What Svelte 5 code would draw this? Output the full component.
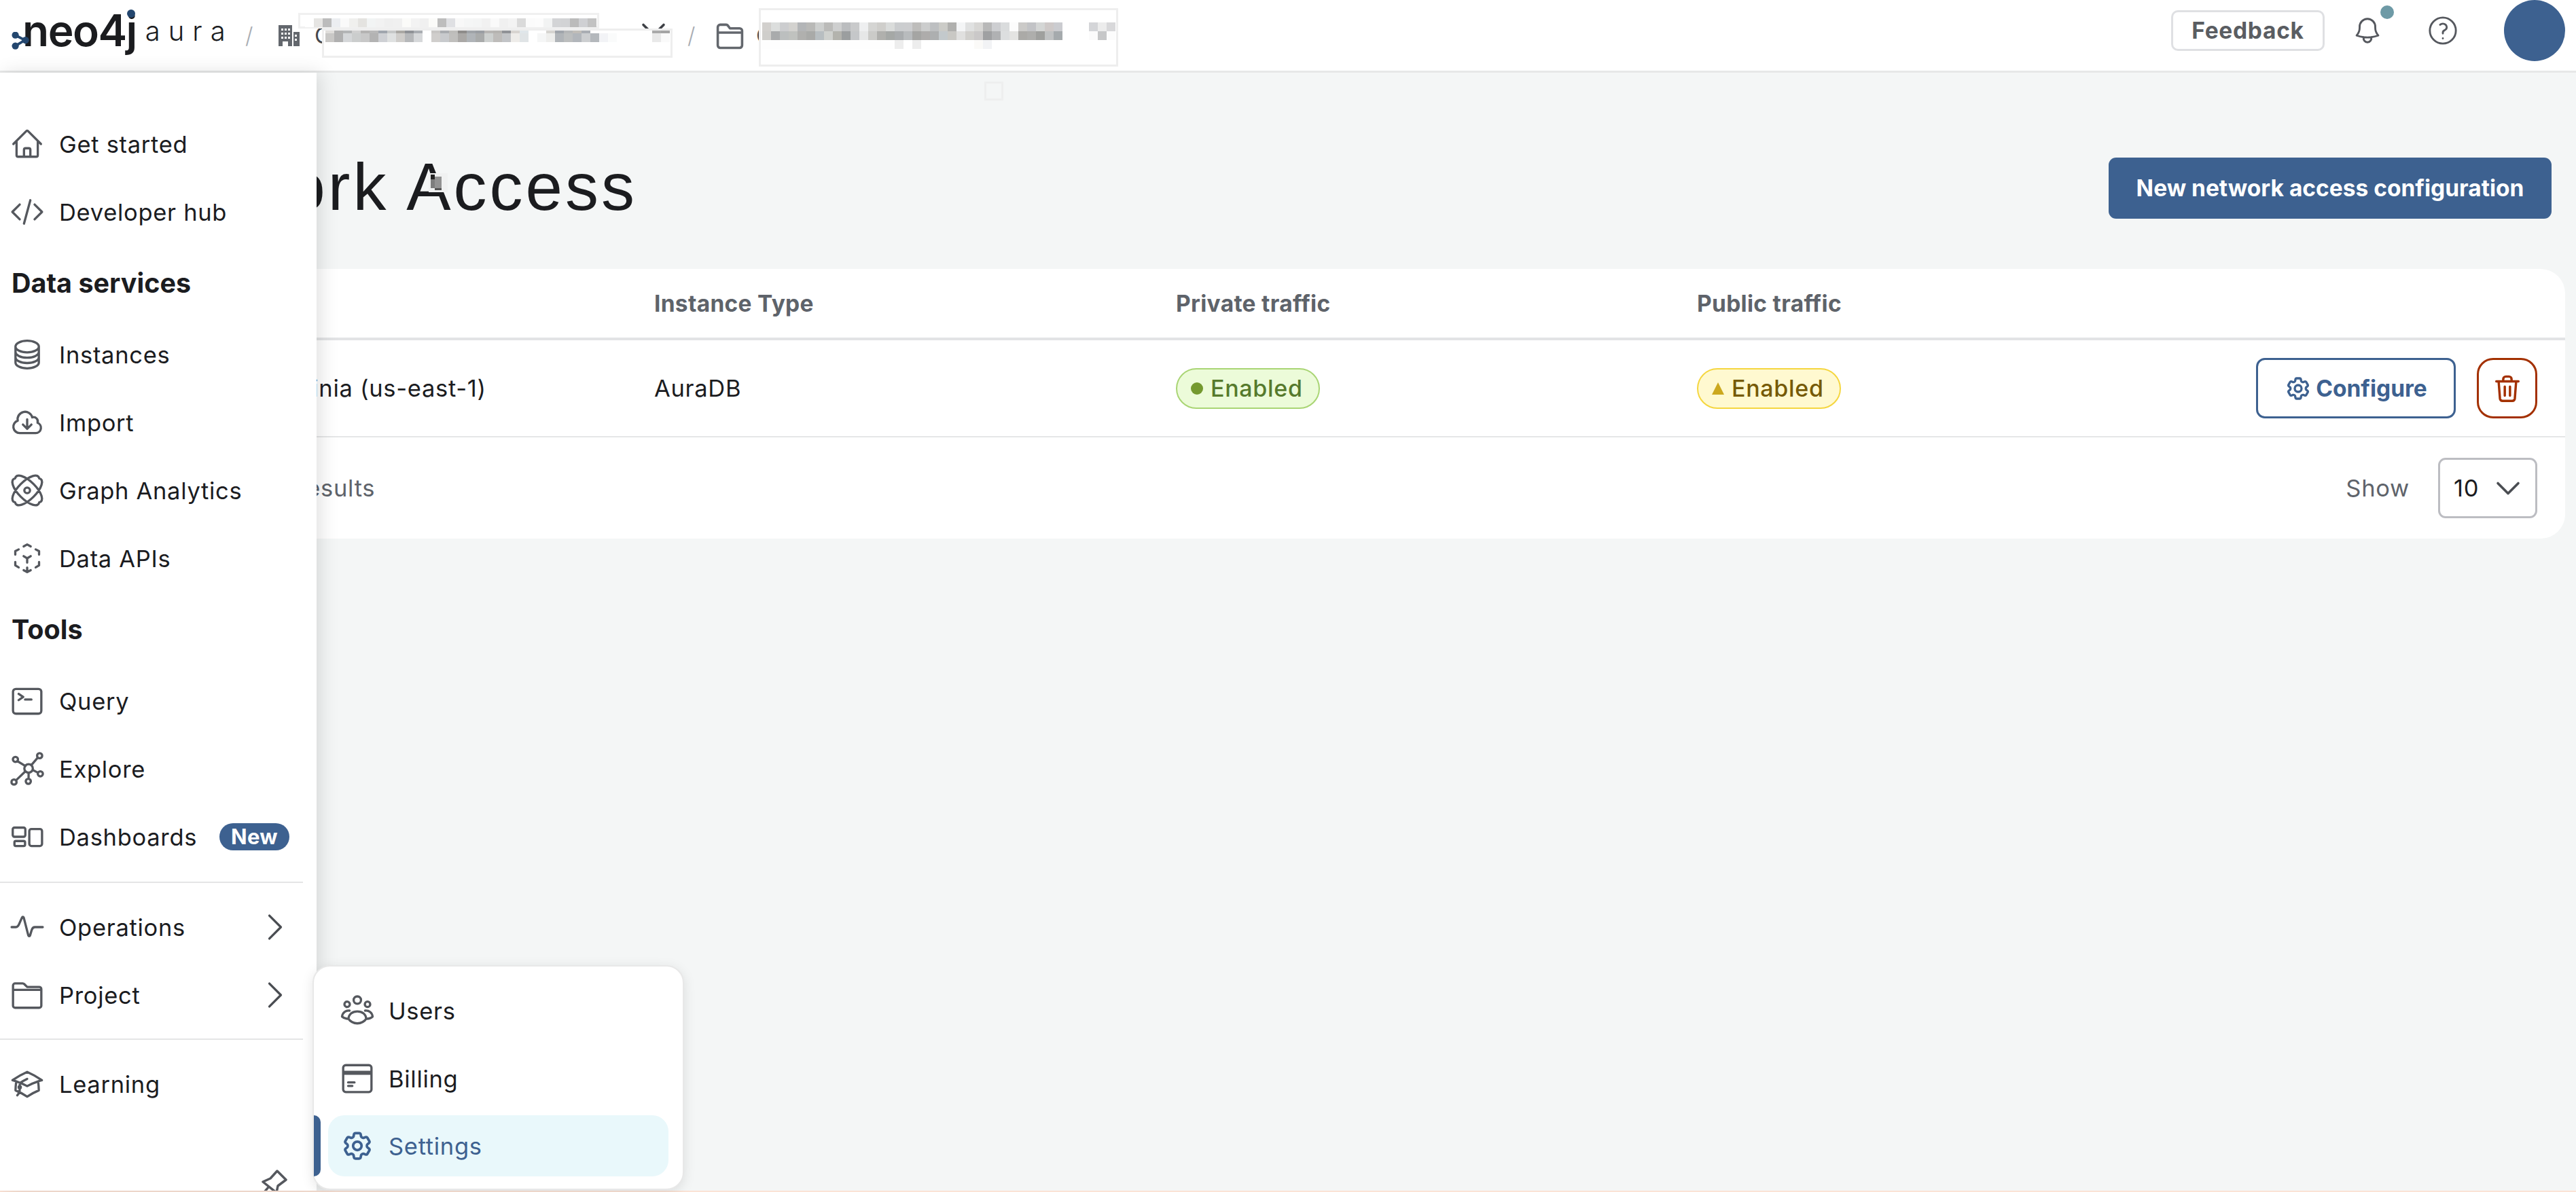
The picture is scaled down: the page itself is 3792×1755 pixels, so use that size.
<script lang="ts">
  // circle as an svg subpath, so every icon can live in one path string
  const dot = (x: number, y: number, r: number) =>
    `M${x - r} ${y}a${r} ${r} 0 1 0 ${2 * r} 0a${r} ${r} 0 1 0 ${-2 * r} 0`;

  const cog =
    "M9.594 3.94c.09-.542.56-.94 1.11-.94h2.593c.55 0 1.02.398 1.11.94l.213 1.281c.063.374.313.686.645.87.074.04.147.083.22.127.324.196.72.257 1.075.124l1.217-.456a1.125 1.125 0 011.37.49l1.296 2.247a1.125 1.125 0 01-.26 1.431l-1.003.827c-.293.24-.438.613-.431.992a6.759 6.759 0 010 .255c-.007.378.138.75.43.99l1.005.828c.424.35.534.954.26 1.43l-1.298 2.247a1.125 1.125 0 01-1.369.491l-1.217-.456c-.355-.133-.75-.072-1.076.124a6.57 6.57 0 01-.22.128c-.331.183-.581.495-.644.869l-.213 1.28c-.09.543-.56.941-1.11.941h-2.594c-.55 0-1.02-.398-1.11-.94l-.213-1.281c-.062-.374-.312-.686-.644-.87a6.52 6.52 0 01-.22-.127c-.325-.196-.72-.257-1.076-.124l-1.217.456a1.125 1.125 0 01-1.369-.49l-1.297-2.247a1.125 1.125 0 01.26-1.431l1.004-.827c.292-.24.437-.613.43-.992a6.932 6.932 0 010-.255c.007-.378-.138-.75-.43-.99l-1.004-.828a1.125 1.125 0 01-.26-1.43l1.297-2.247a1.125 1.125 0 011.37-.491l1.216.456c.356.133.751.072 1.076-.124.072-.044.146-.087.22-.128.332-.183.582-.495.644-.869l.214-1.281zM15 12a3 3 0 11-6 0 3 3 0 016 0z";

  const icons: Record<string, string> = {
    home: "M2.25 12l8.954-8.955c.44-.439 1.152-.439 1.591 0L21.75 12M4.5 9.75v10.125c0 .621.504 1.125 1.125 1.125H9.75v-4.875c0-.621.504-1.125 1.125-1.125h2.25c.621 0 1.125.504 1.125 1.125V21h4.125c.621 0 1.125-.504 1.125-1.125V9.75M8.25 21h8.25",
    code: "M17.25 6.75L22.5 12l-5.25 5.25m-10.5 0L1.5 12l5.25-5.25m7.5-3l-4.5 16.5",
    db: "M20.25 6.375c0 2.278-3.694 4.125-8.25 4.125S3.75 8.653 3.75 6.375m16.5 0c0-2.278-3.694-4.125-8.25-4.125S3.75 4.097 3.75 6.375m16.5 0v11.25c0 2.278-3.694 4.125-8.25 4.125s-8.25-1.847-8.25-4.125V6.375m16.5 0v3.75m-16.5-3.75v3.75m16.5 0v3.75C20.25 16.153 16.556 18 12 18s-8.25-1.847-8.25-4.125v-3.75m16.5 0c0 2.278-3.694 4.125-8.25 4.125s-8.25-1.847-8.25-4.125",
    cloud:
      "M12 9.75v6.75m0 0l-3-3m3 3l3-3m-8.25 6a4.5 4.5 0 01-1.41-8.775 5.25 5.25 0 0110.233-2.33 3 3 0 013.758 3.848A3.752 3.752 0 0118 19.5H6.75z",
    atom:
      "M3.5 3.5A12.500 5 45 1 1 20.500 20.500A12.500 5 45 1 1 3.500 3.500zM3.500 20.500A12.500 5 -45 1 1 20.500 3.500A12.500 5 -45 1 1 3.500 20.500z" +
      dot(12, 12, 2),
    api: "M9.5 3.6 12 2.2l2.5 1.4M6 5.7 3.6 7v2.4M18 5.7 20.4 7v2.4M3.6 14.6V17L6 18.4M20.4 14.6V17L18 18.4M9.5 20.4 12 21.8l2.5-1.4M9.5 10.5 12 12l2.5-1.5M12 12v3M12 18.5v3.2",
    query: "M4 3.5h16a2 2 0 0 1 2 2v13.500a2 2 0 0 1-2 2H4a2 2 0 0 1-2-2V5.500a2 2 0 0 1 2-2zM6 7l3.200 2.200L6 11.400M10.500 11h4.500",
    graph:
      dot(13, 11.7, 3) +
      dot(3.7, 5.3, 1.8) +
      dot(20.8, 2.7, 1.8) +
      dot(2.7, 21.3, 1.8) +
      dot(12.8, 20.8, 1.8) +
      dot(21.3, 15.5, 1.8) +
      "M5 6.5l5.8 3.5M19.500 4l-4.600 5.400M4 20.200l6.800-6.500M13 14.700v4.300M15.800 12.700l3.800 2",
    dash: "M3 5.5h6.500a1.200 1.200 0 0 1 1.200 1.200v4.100a1.200 1.200 0 0 1-1.200 1.200H3a1.200 1.200 0 0 1-1.200-1.200V6.700A1.200 1.200 0 0 1 3 5.500zM4 15h5.500a1 1 0 0 1 1 1v1.500a1 1 0 0 1-1 1H4a1 1 0 0 1-1-1V16a1 1 0 0 1 1-1zM15 6.500h6a1.500 1.500 0 0 1 1.500 1.500v9a1.500 1.500 0 0 1-1.500 1.500h-6a1.500 1.500 0 0 1-1.500-1.500V8A1.500 1.500 0 0 1 15 6.500z",
    pulse: "M1 12h3c1.500 0 2-1.200 2.600-2.800L8.300 5.300c.3-.7 1-.7 1.300 0l3.200 12.500c.3.8 1 .8 1.300 0l1.100-3.800c.4-1.200 1-2 2.300-2h5.500",
    folder:
      "M3.500 3.800h5.300c.5 0 .9.200 1.200.500l2 2h8.500A1.500 1.500 0 0 1 22 7.800v11.700a1.500 1.500 0 0 1-1.500 1.500h-17A1.500 1.500 0 0 1 2 19.500V5.300a1.500 1.500 0 0 1 1.500-1.500zM2 8.300h20",
    cap: "M4.260 10.147a60.436 60.436 0 00-.491 6.347A48.627 48.627 0 0112 20.904a48.627 48.627 0 018.232-4.410 60.460 60.460 0 00-.491-6.347m-15.482 0a50.570 50.570 0 00-2.658-.813A59.905 59.905 0 0112 3.493a59.902 59.902 0 0110.399 5.840c-.896.248-1.783.520-2.658.814m-15.482 0A50.697 50.697 0 0112 13.489a50.702 50.702 0 017.740-3.342M6.750 15a.750.750 0 100-1.500.750.750 0 000 1.500zm0 0v-3.675A55.378 55.378 0 0112 8.443m-7.007 11.550A5.981 5.981 0 006.750 15.750v-1.500",
    users:
      dot(12, 4.5, 2.6) +
      dot(4.8, 7.5, 1.9) +
      dot(19.2, 7.5, 1.9) +
      "M5.800 17.800c0-3.300 2.800-5.300 6.200-5.300s6.200 2 6.200 5.300c-1 1.700-3.500 3.200-6.200 3.200s-5.200-1.500-6.200-3.200zM6.500 12c-2.800-.3-5 1.500-5.300 4.200 1 1 2.500 1.500 4.300 1.600M17.500 12c2.800-.3 5 1.500 5.300 4.200-1 1-2.500 1.500-4.300 1.600",
    card: "M3.800 2.500h16.400a1.800 1.800 0 0 1 1.800 1.800v15.400a1.800 1.800 0 0 1-1.800 1.800H3.800A1.800 1.800 0 0 1 2 19.700V4.300a1.800 1.800 0 0 1 1.800-1.800zM2 7.300h20M2 8.600h20M5.500 14.700h4.500M5.500 17.200h3",
    cog,
    bell: "M14.857 17.082a23.848 23.848 0 005.454-1.310A8.967 8.967 0 0118 9.750v-.7V9A6 6 0 006 9v.750a8.967 8.967 0 01-2.312 6.022c1.733.640 3.560 1.085 5.455 1.310m5.714 0a24.255 24.255 0 01-5.714 0m5.714 0a3 3 0 11-5.714 0",
    help:
      dot(12, 12, 10) +
      "M9.879 7.519c1.171-1.025 3.071-1.025 4.242 0 1.172 1.025 1.172 2.687 0 3.712-.203.179-.430.326-.670.442-.745.361-1.450.999-1.450 1.827v.750M12 18h.008",
    right: "M8.250 4.500l7.500 7.500-7.500 7.500",
    down: "M19.500 8.250l-7.500 7.500-7.500-7.500",
    trash:
      "M3.500 6.500h17M8.800 6.300V4.800a2 2 0 0 1 2-2h2.400a2 2 0 0 1 2 2v1.500M5.300 6.800l1 13a2 2 0 0 0 2 1.700h7.400a2 2 0 0 0 2-1.700l1-13M10 10.500v7M14 10.500v7",
    openFolder:
      "M4 3h5c.6 0 1 .300 1.300.700L12 6h8a2 2 0 0 1 2 2v12a2 2 0 0 1-2 2H4a2 2 0 0 1-2-2V5a2 2 0 0 1 2-2zM2 9.500h20",
  };

  type Row = { label: string; icon: string; badge?: string; more?: boolean };

  const topItems: Row[] = [
    { label: "Get started", icon: "home" },
    { label: "Developer hub", icon: "code" },
  ];
  const dataServices: Row[] = [
    { label: "Instances", icon: "db" },
    { label: "Import", icon: "cloud" },
    { label: "Graph Analytics", icon: "atom" },
    { label: "Data APIs", icon: "api" },
  ];
  const tools: Row[] = [
    { label: "Query", icon: "query" },
    { label: "Explore", icon: "graph" },
    { label: "Dashboards", icon: "dash", badge: "New" },
  ];
  const manage: Row[] = [
    { label: "Operations", icon: "pulse", more: true },
    { label: "Project", icon: "folder", more: true },
  ];
  const submenu = [
    { label: "Users", icon: "users" },
    { label: "Billing", icon: "card" },
    { label: "Settings", icon: "cog", active: true },
  ];

  // the account and project names are pixelated out in the screenshot
  const orgRow = "#fff #e6e5e3 #bcbcbc #eceef1 #fafafa #f0f0ee #e4e3e0 #f2f4f4 #f2f2f2 #efefef #f0f0f0 #fbfbf9 #f3f3f3 #f0f0f0 #fbfbf9 #bdbdbd #dfe0e3 #f8f8f8 #f5f6f6 #f4f5f5 #f1f1f1 #fafafa #f0f0f0 #f3f3f3 #dadada #fbfbfb #fcfcfc #f2f3f3 #d3d4d6 #d2d3d5 #bbbbbb #cfd0d3 #c2c2c2".split(" ");
  const custTop = "#e0dedb #b0b0b0 #b3b5b6 #d0d0d0 #b4b3b2 #b8b8b8 #a0a6ae #c6c8c8 #aaa8a4 #8f9296 #a9adb2 #fff #c8c6c4 #a9acb0 #bdbcba #8e8c8a #a0a4a8 #9a9ea3 #b8b6b4 #b5b3b0 #909296 #d8d4d0 #e0e6ea #fff #fff #d6d4d0 #a0a5ab #b5b7b8 #c0bdb8 #a9adb3 #fff #fff #fff #fff #fff #fff #fff #aaa #a5a5a5".split(" ");
  const custRow = "#c9c8c6 #b0b0b0 #d5d7d9 #cbcdcd #c8c8c8 #b3b3b3 #ced0d4 #dfe1e1 #cfcdca #b6b8ba #d6d8da #fff #d0cecc #c8cacd #c0bfbd #aaa8a6 #b0b4b8 #a9abab #cdd0cf #bebcba #c2c4c7 #eeece9 #e0e4e6 #fff #f5f6f6 #eeeeec #b0b4b8 #bcbebe #b2b6bb #ccced0 #b4b8bc #f2f3f6 #fafbfb #fff #fff #fff #fff #e9e9e9 #fafafa".split(" ");
  const projRows = [
    "#d2d0cd #dcdedd #cccdcf #d3d2cf #b3b5b7 #b9b9b7 #cdcfce #bbbbb9 #cecfcf #bbbdbf #c9cacb #eeeff0 #d5d5d3 #cfcecb #dadcdb #cbcdcf #cccdcf #bebdbb #cccdcd #bdbfc1 #cbcbc7 #b0b0ae #f4f5f6 #e0e1e1 #d8d7d5 #b8b8b8 #cdced1 #dadcdd #fcfcfc #cbcac8 #c2c3c6 #d4d6d5 #cec9c8 #cbccd0 #fff #fff #fff #d4d5d8 #ececec #d8d8da",
    "#cfcecb #a9abac #bcbfbf #c0c2bf #b0b0ae #a9aaa8 #b8bec1 #cfd1ce #b3b3ad #9b9e9f #c5c7c9 #e6e7e7 #cbcbc8 #b0b0ad #a5a8a6 #a9acae #b8bbbd #a5a5a3 #aeacab #adafb0 #c3c9cc #c9c8c4 #e0e0df #d1d0cd #cac8c8 #9fa0a2 #b0b1b3 #dcdedf #e4e4e2 #abaaa7 #aeaeac #9fa09e #c0c2c3 #a5aaad #fff #fff #fff #fbfbfb #c6c7c8 #fcfcfc",
    "#fefefe #fefefe #fefefe #fefefe #fefefe #fefefe #fefefe #fefefe #fefefe #fefefe #fefefe #fefefe #fefefe #fefefe #fefefe #ededed #fff #ededed #fff #fff #fff #fff #fff #fff #fbfaf8 #f2f3f5",
  ].map((r) => r.split(" "));
</script>

{#snippet icon(name: string, cls: string)}
  <svg class={cls} viewBox="0 0 24 24" fill="none" stroke="currentColor" stroke-linecap="round" stroke-linejoin="round">
    <path d={icons[name]} />
  </svg>
{/snippet}

{#snippet navRow(item: Row)}
  <a class="nav-row" href="#/">
    {@render icon(item.icon, "nav-icon")}
    <span class="nav-label">{item.label}</span>
    {#if item.badge}<span class="badge">{item.badge}</span>{/if}
    {#if item.more}{@render icon("right", "nav-more")}{/if}
  </a>
{/snippet}

{#snippet pixels(row: string[])}
  <div class="px-row">
    {#each row as c}<i class="px" style:background={c}></i>{/each}
  </div>
{/snippet}

<div class="page">
  <header class="topbar">
    <div class="logo">
      <svg class="logo-nodes" viewBox="0 0 30 32" fill="#24476f" stroke="#24476f" stroke-width="4">
        <path d="M6 5l15 8M21 13L6 22" />
        <circle cx="6" cy="5" r="5.500" stroke="none" />
        <circle cx="6" cy="22" r="5.500" stroke="none" />
        <circle cx="22" cy="13" r="5.500" stroke="none" />
      </svg>
      <span class="logo-neo">neo4j</span>
      <i class="logo-dot"></i>
      <span class="logo-aura">aura</span>
    </div>
    <span class="slash first">/</span>
    <svg class="building" viewBox="0 0 35 35" fill="#63676d">
      <path fill-rule="evenodd" d="M2 2h20v31H2zM6 7v3h3V7zM11 7v3h3V7zM16 7v3h3V7zM6 13v3h3v-3zM11 13v3h3v-3zM16 13v3h3v-3zM6 19v3h3v-3zM11 19v3h3v-3zM16 19v3h3v-3zM8 26v7h8v-7zM24 12h9v21h-9zM26 16v3h3v-3zM26 22v3h3v-3z" />
    </svg>
    <span class="crumb org">Customer Name</span>
    {@render icon("down", "crumb-caret")}
    <span class="slash second">/</span>
    {@render icon("openFolder", "crumb-folder")}
    <span class="crumb project">Customer project</span>

    <div class="top-actions">
      <button class="feedback">Feedback</button>
      <span class="bell">
        {@render icon("bell", "top-icon")}
        <i class="bell-dot"></i>
      </span>
      {@render icon("help", "top-icon help")}
      <span class="avatar"></span>
    </div>

    <div class="redact org-a">{@render pixels(orgRow)}</div>
    <div class="redact org-b">
      <div class="thin">{@render pixels(custTop)}</div>
      {@render pixels(custRow)}
    </div>
    <div class="redact project-box">
      {#each projRows as row}{@render pixels(row)}{/each}
    </div>
  </header>

  <main class="content">
    <div class="page-head">
      <h1>Network Access</h1>
      <button class="primary">New network access configuration</button>
    </div>

    <section class="card">
      <div class="row head">
        <span>Region</span>
        <span>Instance Type</span>
        <span>Private traffic</span>
        <span>Public traffic</span>
      </div>
      <div class="row body">
        <span>N. Virginia (us-east-1)</span>
        <span>AuraDB</span>
        <span><span class="status ok"><i class="ok-dot"></i>Enabled</span></span>
        <span><span class="status warn"><i class="warn-tri"></i>Enabled</span></span>
        <div class="row-actions">
          <button class="configure">{@render icon("cog", "btn-icon")}Configure</button>
          <button class="delete">{@render icon("trash", "trash-icon")}</button>
        </div>
      </div>
      <div class="foot">
        <span class="muted">1 results</span>
        <span class="muted show">Show</span>
        <div class="select">
          <span>10</span>
          {@render icon("down", "select-caret")}
        </div>
      </div>
    </section>

    <!-- leftovers of the screenshot's redaction -->
    <svg class="smudge" viewBox="0 0 28 28">
      <rect width="28" height="28" fill="#f0f1f1" />
      <rect x="3" y="2" width="6" height="7" fill="#222" />
      <rect x="3" y="9" width="6" height="13" fill="#7d7d7d" />
      <rect x="9" y="5" width="10" height="17" fill="#929292" />
      <rect x="9" y="22" width="10" height="3" fill="#555" />
    </svg>
    <div class="empty-box"></div>
  </main>

  <div class="bottom-line"></div>

  <nav class="sidebar">
    {#each topItems as item}{@render navRow(item)}{/each}
    <h2>Data services</h2>
    {#each dataServices as item}{@render navRow(item)}{/each}
    <h2>Tools</h2>
    {#each tools as item}{@render navRow(item)}{/each}
    <hr />
    {#each manage as item}{@render navRow(item)}{/each}
    <hr class="second-rule" />
    {@render navRow({ label: "Learning", icon: "cap" })}
    <svg class="pin" viewBox="0 0 50 50" fill="none" stroke="#55585e" stroke-width="3.500" stroke-linejoin="round" stroke-linecap="round">
      <path d="M28 6 41 19 29 28 27 38 7 22 18 17zM15 30 5 42" />
    </svg>
  </nav>

  <div class="popup">
    {#each submenu as item}
      <a class="pop-row" class:active={item.active} href="#/">
        {@render icon(item.icon, "nav-icon")}
        <span>{item.label}</span>
      </a>
    {/each}
  </div>
</div>

<style>
  :global(body) {
    margin: 0;
    background: #f4f6f6;
  }

  .page {
    position: relative;
    display: flex;
    flex-direction: column;
    height: 100vh;
    overflow: hidden;
    font-family: Inter, "Noto Sans", sans-serif;
    font-size: 34.5px;
    letter-spacing: 0.7px;
    color: #1b1c1f;
  }

  button {
    font: inherit;
    letter-spacing: inherit;
    cursor: pointer;
  }

  .topbar {
    position: relative;
    display: flex;
    align-items: center;
    flex: none;
    box-sizing: border-box;
    height: 107px;
    padding-left: 33px;
    background: #fff;
    border-bottom: 3px solid #e7e8e8;
  }

  .logo {
    display: flex;
    align-items: flex-start;
    position: relative;
    width: 300px;
    height: 104px;
  }

  .logo-nodes {
    position: absolute;
    left: -16px;
    top: 47px;
    width: 28px;
    height: 30px;
  }

  .logo-neo {
    margin-top: 10px;
    font-size: 64px;
    line-height: 70px;
    font-weight: 600;
    letter-spacing: -1.500px;
    color: #1b1c1f;
  }

  .logo-dot {
    position: absolute;
    left: 154px;
    top: 14px;
    width: 12px;
    height: 12px;
    border-radius: 50%;
    background: #24476f;
  }

  .logo-aura {
    margin: 26px 0 0 13px;
    font-size: 40px;
    line-height: 40px;
    font-weight: 300;
    letter-spacing: 12px;
    color: #1b1c1f;
  }

  .slash {
    color: #a9adb3;
    font-size: 33px;
    font-weight: 300;
    width: 12px;
    text-align: center;
  }

  .slash.first {
    margin-left: 28px;
  }

  .building {
    width: 35px;
    height: 35px;
    margin-left: 35px;
  }

  .crumb {
    white-space: nowrap;
    color: #44474c;
    font-size: 33px;
  }

  .crumb.org {
    margin-left: 20px;
    width: 475px;
  }

  .crumb-caret {
    align-self: flex-start;
    width: 48px;
    height: 48px;
    margin-top: 20px;
    stroke-width: 1.800;
    color: #3d4045;
  }

  .slash.second {
    margin-left: 26px;
  }

  .crumb-folder {
    width: 43px;
    height: 43px;
    margin-left: 29px;
    stroke-width: 2;
    color: #63676d;
  }

  .crumb.project {
    margin-left: 17px;
  }

  .top-actions {
    display: flex;
    align-items: center;
    align-self: flex-start;
    height: 90px;
    margin-left: auto;
    padding-right: 16px;
  }

  .feedback {
    box-sizing: border-box;
    width: 226px;
    height: 60px;
    padding: 0;
    border: 3px solid #dfe0e3;
    border-radius: 10px;
    background: #fff;
    font-weight: 700;
    font-size: 33.500px;
    color: #5a5d62;
  }

  .bell {
    position: relative;
    display: flex;
    margin-left: 40px;
  }

  .top-icon {
    width: 46px;
    height: 46px;
    color: #55585e;
    stroke-width: 1.500;
  }

  .top-icon.help {
    margin-left: 65px;
  }

  .bell-dot {
    position: absolute;
    right: -16px;
    top: -14px;
    width: 20px;
    height: 20px;
    border-radius: 50%;
    background: #6e9aa6;
  }

  .avatar {
    width: 90px;
    height: 90px;
    margin-left: 67px;
    border-radius: 50%;
    background: #3d6190;
  }

  /* blurred-out names, drawn over the breadcrumb */
  .redact {
    position: absolute;
    box-sizing: border-box;
    background: #fff;
    border: 3px solid #f0f0f0;
  }

  .org-a {
    left: 439px;
    top: 19px;
    width: 443px;
    height: 23px;
    padding: 5px 0 0 5px;
  }

  .org-b {
    left: 474px;
    top: 42px;
    width: 516px;
    height: 43px;
    border-color: #eeeeee;
  }

  .thin .px {
    height: 4px;
  }

  .project-box {
    left: 1117px;
    top: 12px;
    width: 529px;
    height: 86px;
    padding-top: 18px;
    border-color: #eeeeee;
  }

  .px-row {
    display: flex;
    padding-left: 2px;
  }

  .px {
    flex: none;
    width: 13px;
    height: 13px;
  }

  .content {
    position: relative;
    flex: 1;
    padding: 125px 16px 0 310px;
  }

  .page-head {
    display: flex;
    align-items: center;
    justify-content: space-between;
    height: 90px;
    padding-right: 20px;
    margin-bottom: 74px;
  }

  h1 {
    margin: 0 0 4px -125px;
    font-family: "Liberation Sans", sans-serif;
    font-weight: 400;
    font-size: 98px;
    letter-spacing: 4px;
    color: #1b1c1f;
    white-space: nowrap;
  }

  .primary {
    width: 652px;
    height: 90px;
    padding: 0;
    border: none;
    border-radius: 11px;
    background: #3d6190;
    color: #fff;
    font-weight: 700;
    font-size: 33.500px;
    letter-spacing: 0;
  }

  .card {
    background: #fff;
    border-radius: 36px;
  }

  .row {
    display: grid;
    grid-template-columns: 619px 768px 767px 1fr auto;
    align-items: center;
    padding-left: 34px;
  }

  .head {
    height: 101px;
    border-bottom: 4px solid #e2e3e5;
    font-weight: 700;
    font-size: 33.500px;
    letter-spacing: 0.300px;
    color: #5e636a;
  }

  .body {
    height: 141px;
    border-bottom: 2px solid #e5e6e7;
  }

  .status {
    display: inline-flex;
    align-items: center;
    box-sizing: border-box;
    width: 212px;
    height: 60px;
    padding-left: 20px;
    border-radius: 30px;
    font-weight: 500;
    font-size: 34px;
    border: 2px solid;
  }

  .ok {
    background: #ecfbd9;
    border-color: #a9d574;
    color: #567a2c;
  }

  .warn {
    background: #fff9d0;
    border-color: #f5d63f;
    color: #765a06;
  }

  .ok-dot {
    width: 18px;
    height: 18px;
    margin-right: 11px;
    border-radius: 50%;
    background: #74992f;
  }

  .warn-tri {
    width: 0;
    height: 0;
    margin-right: 11px;
    border: 9px solid transparent;
    border-top: none;
    border-bottom: 18px solid #cca81e;
  }

  .row-actions {
    display: flex;
    gap: 31px;
    padding-right: 41px;
  }

  .configure {
    display: flex;
    align-items: center;
    justify-content: center;
    gap: 6px;
    box-sizing: border-box;
    width: 294px;
    height: 89px;
    padding: 0;
    border: 3px solid #3d6190;
    border-radius: 13px;
    background: #fff;
    color: #3d6190;
    font-weight: 700;
    font-size: 33.500px;
    letter-spacing: 0;
  }

  .btn-icon {
    width: 40px;
    height: 40px;
    stroke-width: 2;
  }

  .delete {
    display: flex;
    align-items: center;
    justify-content: center;
    box-sizing: border-box;
    width: 89px;
    height: 89px;
    padding: 0;
    border: 3px solid #a33000;
    border-radius: 24px;
    background: #fff;
    color: #a33000;
  }

  .trash-icon {
    width: 46px;
    height: 46px;
    stroke-width: 1.800;
  }

  .foot {
    display: flex;
    align-items: center;
    height: 149px;
    padding: 0 41px 0 103px;
  }

  .muted {
    color: #5e636a;
  }

  .show {
    margin-left: auto;
    margin-right: 42px;
  }

  .select {
    display: flex;
    align-items: center;
    justify-content: space-between;
    box-sizing: border-box;
    width: 146px;
    height: 89px;
    padding: 0 22px 0 20px;
    border: 3px solid #bcbdc2;
    border-radius: 11px;
  }

  .select-caret {
    width: 48px;
    height: 48px;
    color: #4a4d52;
    stroke-width: 1.800;
    margin-right: -6px;
  }

  .smudge {
    position: absolute;
    left: 631px;
    top: 148px;
    width: 28px;
    height: 28px;
  }

  .empty-box {
    position: absolute;
    left: 1449px;
    top: 13px;
    box-sizing: border-box;
    width: 28px;
    height: 28px;
    border: 3px solid #eeefef;
  }

  .bottom-line {
    flex: none;
    height: 2px;
    background: #fbe3d6;
  }

  .sidebar {
    position: absolute;
    left: 0;
    top: 107px;
    bottom: 2px;
    display: flex;
    flex-direction: column;
    box-sizing: border-box;
    width: 466px;
    padding-top: 55px;
    overflow: hidden;
    background: #fff;
    box-shadow: 6px 0 26px rgba(0, 0, 0, 0.12);
  }

  .nav-row {
    display: flex;
    align-items: center;
    flex: none;
    height: 100px;
    padding-left: 15px;
    color: inherit;
    text-decoration: none;
  }

  .nav-icon {
    flex: none;
    width: 50px;
    height: 50px;
    color: #55585e;
    stroke-width: 1.600;
  }

  .nav-label {
    margin-left: 22px;
  }

  .nav-more {
    width: 54px;
    height: 54px;
    margin-left: auto;
    margin-right: 34px;
    color: #4a4d52;
    stroke-width: 1.500;
  }

  .badge {
    margin-left: auto;
    margin-right: 40px;
    padding: 0 17px;
    height: 40px;
    line-height: 40px;
    border-radius: 20px;
    background: #3d6190;
    color: #fff;
    font-size: 31px;
    letter-spacing: 0.300px;
    font-weight: 700;
  }

  h2 {
    display: flex;
    align-items: center;
    flex: none;
    height: 110px;
    margin: 0;
    padding-left: 17px;
    font-size: 39.500px;
    letter-spacing: 0;
    font-weight: 700;
  }

  hr {
    flex: none;
    width: 446px;
    height: 2px;
    margin: 16px 0 15px;
    padding: 0;
    border: none;
    background: #e4e5e6;
  }

  .second-rule {
    margin: 14px 0 15px;
  }

  .pin {
    position: absolute;
    left: 380px;
    top: 1611px;
    width: 50px;
    height: 50px;
  }

  .popup {
    position: absolute;
    left: 460px;
    top: 1421px;
    display: flex;
    flex-direction: column;
    box-sizing: border-box;
    width: 547px;
    height: 331px;
    padding: 15px 21px 18px 21px;
    border: 2px solid #e8e8e8;
    border-radius: 26px;
    background: #fff;
    box-shadow: 0 4px 18px rgba(0, 0, 0, 0.1);
  }

  .pop-row {
    position: relative;
    display: flex;
    align-items: center;
    flex: none;
    height: 100px;
    gap: 21px;
    padding-left: 18px;
    border-radius: 24px;
    color: inherit;
    text-decoration: none;
  }

  .pop-row.active {
    height: 90px;
    margin-top: auto;
    background: #e9f8fb;
    color: #3d6190;
  }

  .pop-row.active .nav-icon {
    color: #3d6190;
    stroke-width: 1.800;
  }

  .pop-row.active::before {
    content: "";
    position: absolute;
    left: -21px;
    top: 0;
    bottom: 0;
    width: 10px;
    border-radius: 0 10px 10px 0;
    background: #3d6190;
  }
</style>
